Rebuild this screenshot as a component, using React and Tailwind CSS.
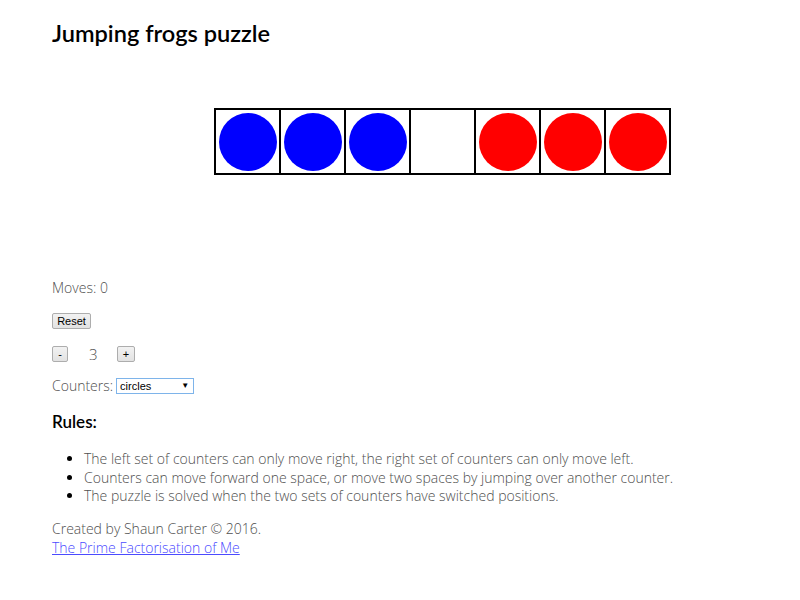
export default function App() {
  const cells = ["blue", "blue", "blue", null, "red", "red", "red"];
  const btn =
    "h-[16px] border border-[#adadad] rounded-[2px] bg-gradient-to-b from-[#f2f2f2] to-[#e2e2e2] text-[11px] leading-[14px] text-black font-['Liberation_Sans',Arial,sans-serif] flex items-center justify-center";
  return (
    <div className="min-h-[600px] w-[800px] bg-white pl-[52px] font-['Open_Sans',sans-serif] font-light text-[#4f4f4f] text-[14px]">
      <h1 className="pt-[17px] text-[23.6px] leading-[32px] font-semibold text-black font-['Lato',sans-serif]">
        Jumping frogs puzzle
      </h1>
      <div className="mt-[59px] ml-[162px] flex w-fit border-2 border-black">
        {cells.map((c, i) => (
          <div
            key={i}
            className={`h-[63px] flex items-center justify-center ${i > 0 ? "w-[65px] border-l-2 border-black" : "w-[63px]"}`}
          >
            {c === "blue" && <div className="w-[58px] h-[58px] rounded-full bg-[#0000ff]" />}
            {c === "red" && <div className="w-[58px] h-[58px] rounded-full bg-[#ff0000]" />}
          </div>
        ))}
      </div>
      <div className="mt-[103px] leading-[20px]">Moves: 0</div>
      <div className="mt-[15px]">
        <button className={`${btn} w-[39px]`}>Reset</button>
      </div>
      <div className="mt-[17px] flex items-center h-[16px]">
        <button className={`${btn} w-[16px]`}>-</button>
        <span className="ml-[21px] w-[8px] text-[15px] leading-[16px]">3</span>
        <button className={`${btn} w-[18px] ml-[20px]`}>+</button>
      </div>
      <div className="mt-[14px] flex items-center leading-[20px]">
        <span className="text-[14px]">Counters:</span>
        <div className="ml-[3px] w-[78px] h-[16px] border border-[#7eb4ea] bg-white flex items-center justify-between pl-[3px] pr-[4px] text-[11px] text-black font-normal font-['Liberation_Sans',Arial,sans-serif]">
          <span>circles</span>
          <span className="text-[8px]">▼</span>
        </div>
      </div>
      <h2 className="mt-[14px] text-[17px] leading-[24px] font-semibold text-black font-['Lato',sans-serif]">
        Rules:
      </h2>
      <ul className="mt-[16px] list-disc pl-[32px] leading-[18.5px] marker:text-black">
        <li>The left set of counters can only move right, the right set of counters can only move left.</li>
        <li>Counters can move forward one space, or move two spaces by jumping over another counter.</li>
        <li>The puzzle is solved when the two sets of counters have switched positions.</li>
      </ul>
      <div className="mt-[13px] leading-[19px]">
        <div>Created by Shaun Carter © 2016.</div>
        <a href="#" className="text-[#4b4bff] underline">The Prime Factorisation of Me</a>
      </div>
    </div>
  );
}
